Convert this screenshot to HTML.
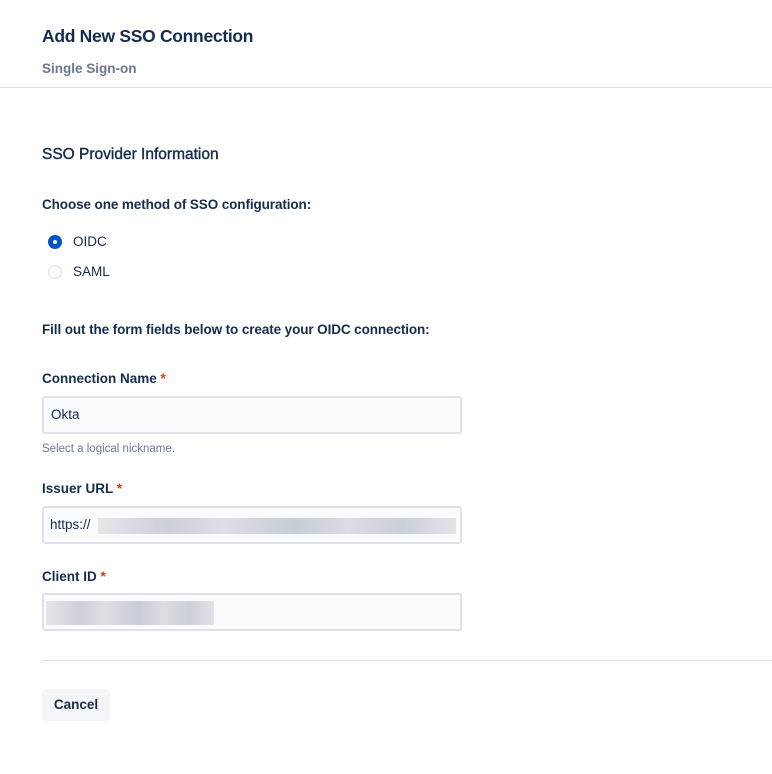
<!DOCTYPE html>
<html><head><style>
body{margin:0;width:772px;height:774px;background:#fff;font-family:"Liberation Sans",sans-serif;color:#172b4d;position:relative;overflow:hidden}
.a{position:absolute;white-space:nowrap}
.b{font-weight:bold}
.inp{position:absolute;left:42px;width:416px;height:34px;border:2px solid #dfe1e6;border-radius:3px;background:#fafbfc}
.star{color:#de350b}
.blur{position:absolute;background:linear-gradient(90deg,#e4e6ea,#ccd0d7 20%,#dcdfe4 35%,#c8cdd5 55%,#dadde2 70%,#cbd0d7 85%,#e1e3e7)}
</style></head><body>
<div class="a b" style="left:42px;top:26px;font-size:17.5px;letter-spacing:-0.3px">Add New SSO Connection</div>
<div class="a b" style="left:42px;top:61px;font-size:13.5px;color:#6b778c">Single Sign-on</div>
<div class="a" style="left:0;top:87px;width:772px;height:1px;background:#dfe1e6"></div>
<div class="a" style="left:42px;top:146px;font-size:15.5px;-webkit-text-stroke:0.4px #172b4d">SSO Provider Information</div>
<div class="a b" style="left:42px;top:197px;font-size:13.5px;letter-spacing:-0.1px">Choose one method of SSO configuration:</div>
<div class="a" style="left:48px;top:235px;width:14px;height:14px;border-radius:50%;background:#0052cc"></div>
<div class="a" style="left:53px;top:240px;width:4px;height:4px;border-radius:50%;background:#fff"></div>
<div class="a" style="left:73px;top:234px;font-size:13.5px">OIDC</div>
<div class="a" style="left:48px;top:265px;width:12px;height:12px;border-radius:50%;border:1px solid #dfe1e6;background:#fafbfc"></div>
<div class="a" style="left:73px;top:264px;font-size:13.5px">SAML</div>
<div class="a b" style="left:42px;top:322px;font-size:13.5px;letter-spacing:-0.1px">Fill out the form fields below to create your OIDC connection:</div>
<div class="a b" style="left:42px;top:371px;font-size:13.5px">Connection Name <span class="star">*</span></div>
<div class="inp" style="top:396px"></div>
<div class="a" style="left:51px;top:407px;font-size:13.5px">Okta</div>
<div class="a" style="left:42px;top:443px;font-size:11.5px;color:#6b778c">Select a logical nickname.</div>
<div class="a b" style="left:42px;top:481px;font-size:13.5px">Issuer URL <span class="star">*</span></div>
<div class="inp" style="top:506px"></div>
<div class="a" style="left:50px;top:517px;font-size:13.5px">https://</div>
<div class="blur" style="left:98px;top:518px;width:358px;height:16px"></div>
<div class="a b" style="left:42px;top:569px;font-size:13.5px">Client ID <span class="star">*</span></div>
<div class="inp" style="top:593px"></div>
<div class="blur" style="left:46px;top:601px;width:168px;height:24px"></div>
<div class="a" style="left:42px;top:660px;width:730px;height:1px;background:#dfe1e6"></div>
<div class="a b" style="left:42px;top:689px;width:68px;height:32px;border-radius:3px;background:#f4f5f7;font-size:13.5px;line-height:32px;text-align:center">Cancel</div>
</body></html>
